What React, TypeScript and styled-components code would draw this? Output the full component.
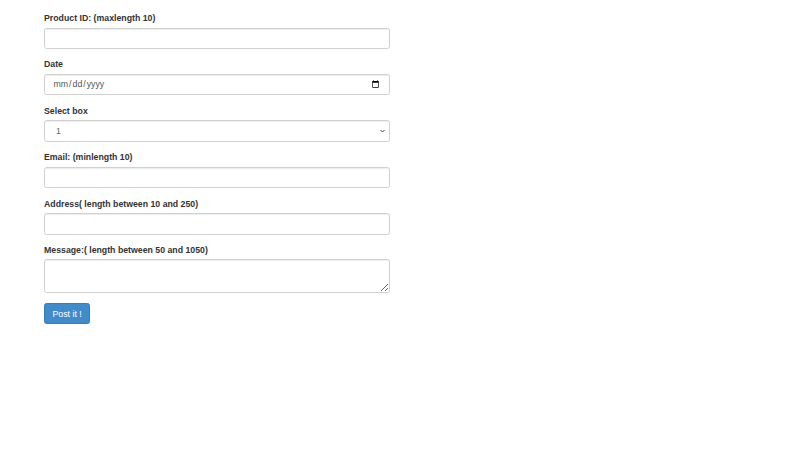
import React from "react";
import styled, { createGlobalStyle } from "styled-components";

const GlobalStyle = createGlobalStyle`
  * {
    box-sizing: border-box;
  }
  body {
    margin: 0;
    background: #fff;
    color: #333;
    font-family: "Liberation Sans", Arial, sans-serif;
    font-size: 8.75px;
    line-height: 1.43;
  }
`;

const Page = styled.div`
  padding: 12px 0 0 44px;
`;

const Form = styled.form`
  width: 346px;
  display: flex;
  flex-direction: column;
`;

const Group = styled.div`
  display: flex;
  flex-direction: column;
  margin-bottom: 9.4px;
`;

const Label = styled.label`
  font-weight: bold;
  font-size: 8.75px;
  line-height: 12.5px;
  margin-bottom: 3px;
`;

const fieldStyle = `
  display: block;
  width: 100%;
  padding: 3.75px 7.5px;
  font-family: "Liberation Sans", Arial, sans-serif;
  font-size: 8.75px;
  line-height: 1.43;
  color: #555;
  background: #fff;
  border: 1px solid #d0d0d0;
  border-radius: 2.5px;
  box-shadow: inset 0 1px 1px rgba(0, 0, 0, 0.075);
  outline: none;
`;

const Input = styled.input`
  ${fieldStyle}
  height: 21.5px;
`;

const SelectWrap = styled.div`
  position: relative;
`;

const Select = styled.select`
  ${fieldStyle}
  appearance: none;
  height: 21.5px;
  padding: 2px 11px;
  color: #666;
`;

const Chevron = styled.svg`
  position: absolute;
  right: 5px;
  top: 9px;
  width: 5px;
  height: 4px;
  pointer-events: none;
`;

const TextArea = styled.textarea`
  ${fieldStyle}
  height: 34px;
  resize: vertical;
`;

const Button = styled.button<{ $primary?: boolean }>`
  align-self: flex-start;
  height: 21px;
  padding: 3.75px 7.5px;
  font-family: "Liberation Sans", Arial, sans-serif;
  font-size: 8.75px;
  line-height: 1.43;
  color: #fff;
  background: ${(p) => (p.$primary ? "#428bca" : "#fff")};
  border: 1px solid #357ebd;
  border-radius: 2.5px;
  cursor: pointer;
`;

export default function App() {
  return (
    <Page>
      <GlobalStyle />
      <Form onSubmit={(e) => e.preventDefault()}>
        <Group>
          <Label htmlFor="pid">Product ID: (maxlength 10)</Label>
          <Input id="pid" type="text" maxLength={10} />
        </Group>
        <Group>
          <Label htmlFor="date">Date</Label>
          <Input id="date" type="date" />
        </Group>
        <Group>
          <Label htmlFor="sel">Select box</Label>
          <SelectWrap>
            <Select id="sel" defaultValue="1">
              <option value="1">1</option>
              <option value="2">2</option>
              <option value="3">3</option>
            </Select>
            <Chevron viewBox="0 0 5 4">
              <path d="M0.5 1 L2.5 3 L4.5 1" fill="none" stroke="#444" strokeWidth="1" />
            </Chevron>
          </SelectWrap>
        </Group>
        <Group>
          <Label htmlFor="email">Email: (minlength 10)</Label>
          <Input id="email" type="text" minLength={10} />
        </Group>
        <Group>
          <Label htmlFor="addr">Address( length between 10 and 250)</Label>
          <Input id="addr" type="text" minLength={10} maxLength={250} />
        </Group>
        <Group>
          <Label htmlFor="msg">Message:( length between 50 and 1050)</Label>
          <TextArea id="msg" minLength={50} maxLength={1050} />
        </Group>
        <Button type="submit" $primary>
          Post it !
        </Button>
      </Form>
    </Page>
  );
}
